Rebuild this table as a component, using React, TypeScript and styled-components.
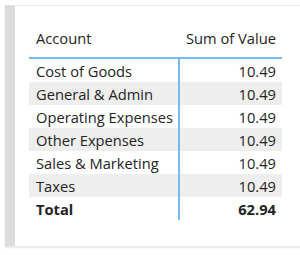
import React from "react";
import styled, { createGlobalStyle } from "styled-components";

const GlobalStyle = createGlobalStyle`
  html, body {
    margin: 0;
    padding: 0;
    background: #ffffff;
    overflow: hidden;
  }
`;

const Page = styled.div`
  width: 300px;
  height: 255px;
  padding: 5px 0 0 5px;
  box-sizing: border-box;
  font-family: "Open Sans", "Noto Sans", sans-serif;
  color: #252423;
`;

const Card = styled.div`
  width: 310px;
  height: 242px;
  box-sizing: border-box;
  background: #ffffff;
  border: 1px solid #ececec;
  border-left: 10px solid #dcdcdc;
  box-shadow: 0 1px 2px rgba(0, 0, 0, 0.1);
  padding: 20px 0 0 14px;
`;

const Table = styled.div`
  display: grid;
  grid-template-columns: 151px 102px;
  width: 253px;
`;

const HeaderCell = styled.div<{ $right?: boolean }>`
  height: 33px;
  box-sizing: border-box;
  display: flex;
  align-items: flex-end;
  justify-content: ${(p) => (p.$right ? "flex-end" : "flex-start")};
  padding: 0 6px 9px 7px;
  font-size: 14.7px;
  white-space: nowrap;
  border-bottom: 2px solid #78b8f4;
`;

const Cell = styled.div<{ $right?: boolean; $shade?: boolean; $bold?: boolean }>`
  height: 23px;
  box-sizing: border-box;
  display: flex;
  align-items: center;
  justify-content: ${(p) => (p.$right ? "flex-end" : "flex-start")};
  padding: 0 6px 0 7px;
  font-size: 14.7px;
  font-weight: ${(p) => (p.$bold ? 700 : 400)};
  background: ${(p) => (p.$shade ? "#eeeeee" : "transparent")};
  border-right: ${(p) => (p.$right ? "none" : "2px solid #78b8f4")};
  white-space: nowrap;
`;

const rows = [
  { account: "Cost of Goods", value: "10.49" },
  { account: "General & Admin", value: "10.49" },
  { account: "Operating Expenses", value: "10.49" },
  { account: "Other Expenses", value: "10.49" },
  { account: "Sales & Marketing", value: "10.49" },
  { account: "Taxes", value: "10.49" },
];

const App = (): JSX.Element => {
  return (
    <Page>
      <GlobalStyle />
      <Card>
        <Table>
          <HeaderCell>Account</HeaderCell>
          <HeaderCell $right>Sum of Value</HeaderCell>
          {rows.map((r, i) => (
            <React.Fragment key={r.account}>
              <Cell $shade={i % 2 === 1}>{r.account}</Cell>
              <Cell $right $shade={i % 2 === 1}>
                {r.value}
              </Cell>
            </React.Fragment>
          ))}
          <Cell $bold>Total</Cell>
          <Cell $right $bold>
            62.94
          </Cell>
        </Table>
      </Card>
    </Page>
  );
};

export default App;
